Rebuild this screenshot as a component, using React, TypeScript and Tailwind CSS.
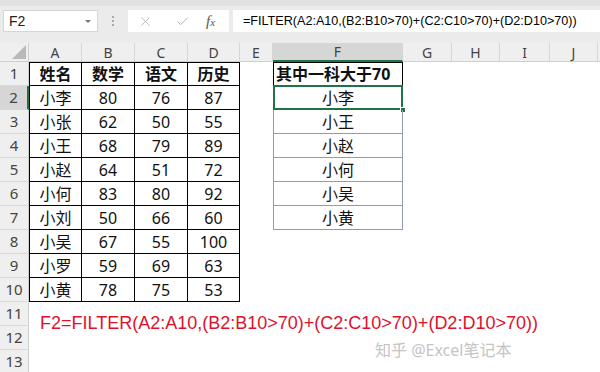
import { X, Check } from "lucide-react";

const cols = [
  { key: "A", w: "w-[53px]" },
  { key: "B", w: "w-[53px]" },
  { key: "C", w: "w-[53px]" },
  { key: "D", w: "w-[52px]" },
  { key: "E", w: "w-[33px]" },
  { key: "F", w: "w-[130px]" },
  { key: "G", w: "w-[49px]" },
  { key: "H", w: "w-[48px]" },
  { key: "I", w: "w-[50px]" },
  { key: "J", w: "w-[48px]" },
];

const data: (string | number)[][] = [
  ["姓名", "数学", "语文", "历史"],
  ["小李", 80, 76, 87],
  ["小张", 62, 50, 55],
  ["小王", 68, 79, 89],
  ["小赵", 64, 51, 72],
  ["小何", 83, 80, 92],
  ["小刘", 50, 66, 60],
  ["小吴", 67, 55, 100],
  ["小罗", 59, 69, 63],
  ["小黄", 78, 75, 53],
];

const result = ["其中一科大于70", "小李", "小王", "小赵", "小何", "小吴", "小黄"];

const formula = "=FILTER(A2:A10,(B2:B10>70)+(C2:C10>70)+(D2:D10>70))";

const font = { fontFamily: '"Noto Sans", "Noto Sans CJK SC", sans-serif' };

function Toolbar() {
  return (
    <div className="h-[43px] bg-[#ebebeb] border-t-[6px] border-[#e1e1e1] flex items-start pt-[4px] pl-[3px]">
      <div className="w-[95px] h-[22px] bg-white border border-[#d6d6d6] flex items-center justify-between pl-[5px] pr-[6px]">
        <span className="text-[14px] text-[#222]" style={{ fontFamily: '"Liberation Sans", sans-serif' }}>
          F2
        </span>
        <span className="w-0 h-0 border-x-[3px] border-x-transparent border-t-[3px] border-t-[#777]" />
      </div>
      <div className="w-[30px] h-[22px] flex flex-col items-center justify-center gap-[2px]">
        <span className="w-[2px] h-[2px] bg-[#a8a8a8]" />
        <span className="w-[2px] h-[2px] bg-[#a8a8a8]" />
        <span className="w-[2px] h-[2px] bg-[#a8a8a8]" />
      </div>
      <div className="w-[101px] h-[22px] bg-white flex items-center pl-[10px]">
        <X size={15} strokeWidth={1.4} className="text-[#b5b5b5]" />
        <Check size={15} strokeWidth={1.6} className="text-[#b5b5b5] ml-[22px]" />
        <span
          className="ml-[16px] text-[15px] italic text-[#555]"
          style={{ fontFamily: '"Liberation Serif", serif' }}
        >
          f<span className="text-[11px]">x</span>
        </span>
      </div>
      <div className="ml-[4px] flex-1 h-[22px] bg-white flex items-center pl-[10px]">
        <span className="text-[12.6px] text-[#000]" style={{ fontFamily: '"Liberation Sans", sans-serif' }}>
          {formula}
        </span>
      </div>
    </div>
  );
}

function HeaderRow() {
  return (
    <div className="flex h-[19px] bg-[#efefef]" style={font}>
      <div className="w-[29px] h-full border-r border-b border-[#cfcfcf] flex items-end justify-end pr-[2px] pb-[2px]">
        <svg width="14" height="14" viewBox="0 0 14 14">
          <polygon points="14,0 14,14 0,14" fill="#b9b9b9" />
        </svg>
      </div>
      {cols.map((c) => (
        <div
          key={c.key}
          className={`${c.w} h-full border-r border-[#d6d6d6] flex items-center justify-center text-[14px] text-[#444] ${
            c.key === "F" ? "bg-[#d6d6d6] border-b-2 border-b-[#217346]" : "border-b border-b-[#cfcfcf]"
          }`}
        >
          {c.key}
        </div>
      ))}
      <div className="flex-1 border-b border-[#cfcfcf]" />
    </div>
  );
}

function Row({ n }: { n: number }) {
  const inTable = n <= 10;
  const rowData = inTable ? data[n - 1] : null;
  const fVal = n <= 7 ? result[n - 1] : null;
  return (
    <div className="flex h-[24px]" style={font}>
      <div
        className={`w-[29px] h-full flex items-center justify-center text-[15px] text-[#444] border-b border-[#d9d9d9] ${
          n === 2 ? "bg-[#d6d6d6] border-r-2 border-r-[#217346]" : "bg-[#efefef] border-r border-r-[#cfcfcf]"
        }`}
      >
        {n}
      </div>
      {cols.map((c, i) => {
        if (i < 4 && rowData) {
          return (
            <div
              key={c.key}
              className={`${c.w} h-full flex items-center justify-center text-[16px] text-[#111] border-r border-b border-black ${
                n === 1 ? "border-t font-bold" : ""
              } ${i === 0 ? "border-l" : ""}`}
            >
              {rowData[i]}
            </div>
          );
        }
        if (c.key === "F" && fVal) {
          if (n === 1) {
            return (
              <div
                key={c.key}
                className={`${c.w} h-full flex items-center pl-[2px] text-[16px] font-bold text-[#111] border border-black`}
              >
                {fVal}
              </div>
            );
          }
          return (
            <div
              key={c.key}
              className={`${c.w} h-full relative flex items-center justify-center text-[16px] text-[#111] border-x border-b border-[#8d9bb3]`}
            >
              {fVal}
              {n === 2 && (
                <>
                  <div className="absolute inset-[-1px] border-2 border-[#217346]" />
                  <div className="absolute right-[-4px] bottom-[-4px] w-[6px] h-[6px] bg-[#217346] border border-white" />
                </>
              )}
            </div>
          );
        }
        return <div key={c.key} className={`${c.w} h-full`} />;
      })}
      <div className="flex-1" />
    </div>
  );
}

export default function App() {
  const rows = Array.from({ length: 13 }, (_, i) => i + 1);
  return (
    <div className="relative w-[600px] h-[372px] overflow-hidden bg-white">
      <Toolbar />
      <HeaderRow />
      {rows.map((n) => (
        <Row key={n} n={n} />
      ))}
      <div
        className="absolute left-[40px] top-[311px] text-[18px] leading-[24px] text-[#e0112b] whitespace-nowrap"
        style={{ fontFamily: '"Liberation Sans", sans-serif' }}
      >
        F2{formula}
      </div>
      <div
        className="absolute left-[375px] top-[339px] text-[16px] leading-[22px] text-[#c4c4c4] whitespace-nowrap"
        style={font}
      >
        知乎 @Excel笔记本
      </div>
    </div>
  );
}
